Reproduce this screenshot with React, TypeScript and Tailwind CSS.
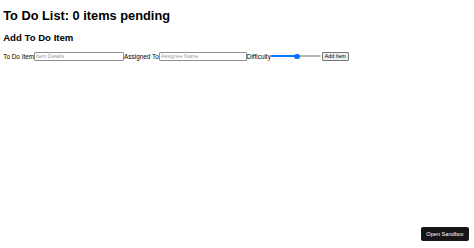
import React from "react";

export default function App() {
  return (
    <div className="relative h-[248px] w-[474px] overflow-hidden bg-white text-black" style={{ fontFamily: '"Liberation Sans", Arial, sans-serif' }}>
      <div className="px-[3.2px] pt-[8.6px]">
        <h1 className="text-[12.8px] font-bold leading-[14.7px]">To Do List: 0 items pending</h1>
        <h2 className="mt-[8.6px] text-[9.6px] font-bold leading-[11px]">Add To Do Item</h2>
        <form className="mt-[9px] flex items-center text-[6.4px] leading-[7.4px]" onSubmit={(e) => e.preventDefault()}>
          <label>To Do Item</label>
          <input
            className="h-[8.6px] w-[90px] rounded-[1px] border-[0.6px] border-[#8f8f8f] px-[1px] text-[5.3px] placeholder:text-[#9a9a9a] outline-none"
            placeholder="Item Details"
          />
          <label>Assigned To</label>
          <input
            className="h-[8.6px] w-[88px] rounded-[1px] border-[0.6px] border-[#8f8f8f] px-[1px] text-[5.3px] placeholder:text-[#9a9a9a] outline-none"
            placeholder="Assignee Name"
          />
          <label>Difficulty</label>
          <div className="relative mx-[0.5px] flex h-[8px] w-[50px] items-center">
            <div className="h-[2px] w-[26px] rounded-l-full bg-[#0075ff]" />
            <div className="h-[2px] flex-1 rounded-r-full border-[0.4px] border-[#b5b5b5] bg-[#efefef]" />
            <div className="absolute left-[23px] h-[5.5px] w-[5.5px] rounded-full bg-[#0075ff]" />
          </div>
          <button
            type="submit"
            className="h-[8.8px] rounded-[1px] border-[0.6px] border-[#767676] bg-[#efefef] px-[2px] text-[5.3px] leading-[6px]"
          >
            Add Item
          </button>
        </form>
      </div>
      <button className="absolute left-[421px] top-[227px] flex h-[14px] w-[48px] items-center justify-center rounded-[2px] bg-[#151515] text-[5.6px] text-white">
        Open Sandbox
      </button>
    </div>
  );
}
